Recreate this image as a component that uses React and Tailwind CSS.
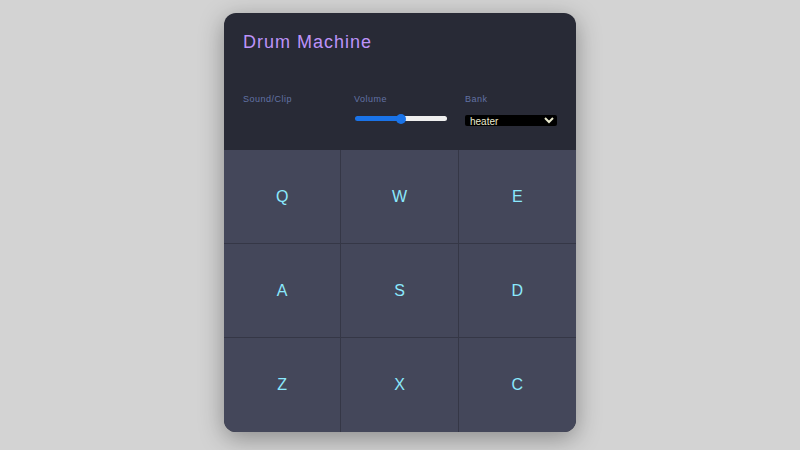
import { useState } from 'react'

const PADS = ['Q', 'W', 'E', 'A', 'S', 'D', 'Z', 'X', 'C']

export default function App() {
  const [volume, setVolume] = useState(50)
  const [bank, setBank] = useState('heater')

  return (
    <div className="flex h-[450px] w-[800px] justify-center bg-[#d3d3d3] pt-[13px] font-['Liberation_Sans',Arial,sans-serif]">
      <div className="flex h-[419px] w-[352px] flex-col overflow-hidden rounded-[12px] bg-[#282a36] shadow-[0_6px_24px_rgba(0,0,0,0.35)]">
        <div className="h-[137px] shrink-0 px-[19px]">
          <h1 className="pt-[18px] text-[18px] leading-[22px] tracking-[1px] text-[#bd93f9]">Drum Machine</h1>
          <div className="mt-[40px] grid grid-cols-3 gap-[19px]">
            <div>
              <p className="text-[9px] leading-[12px] tracking-[0.5px] text-[#6272a4]">Sound/Clip</p>
            </div>
            <div>
              <p className="text-[9px] leading-[12px] tracking-[0.5px] text-[#6272a4]">Volume</p>
              <input
                type="range"
                min="0"
                max="100"
                value={volume}
                onChange={(e) => setVolume(e.target.value)}
                style={{ background: `linear-gradient(to right, #1a73e8 ${volume}%, #efefef ${volume}%)` }}
                className="ml-[1px] mt-[11px] block h-[5px] w-[92px] cursor-pointer appearance-none rounded-full [&::-webkit-slider-thumb]:h-[10px] [&::-webkit-slider-thumb]:w-[10px] [&::-webkit-slider-thumb]:appearance-none [&::-webkit-slider-thumb]:rounded-full [&::-webkit-slider-thumb]:bg-[#1a73e8]"
              />
            </div>
            <div>
              <p className="text-[9px] leading-[12px] tracking-[0.5px] text-[#6272a4]">Bank</p>
              <select
                value={bank}
                onChange={(e) => setBank(e.target.value)}
                className="mt-[10px] block h-[11px] w-[92px] rounded-[2px] bg-black pl-[1px] text-[10px] leading-[11px] text-[#ebebcf]"
              >
                <option value="heater">heater</option>
                <option value="piano">piano</option>
              </select>
            </div>
          </div>
        </div>
        <div className="grid flex-1 grid-cols-3 grid-rows-3 bg-[#44475a]">
          {PADS.map((key, i) => (
            <button
              key={key}
              className={`flex items-center justify-center border-[#353746] text-[16px] text-[#8be9fd] ${
                i % 3 !== 2 ? 'border-r' : ''
              } ${i < 6 ? 'border-b' : ''}`}
            >
              {key}
            </button>
          ))}
        </div>
      </div>
    </div>
  )
}
